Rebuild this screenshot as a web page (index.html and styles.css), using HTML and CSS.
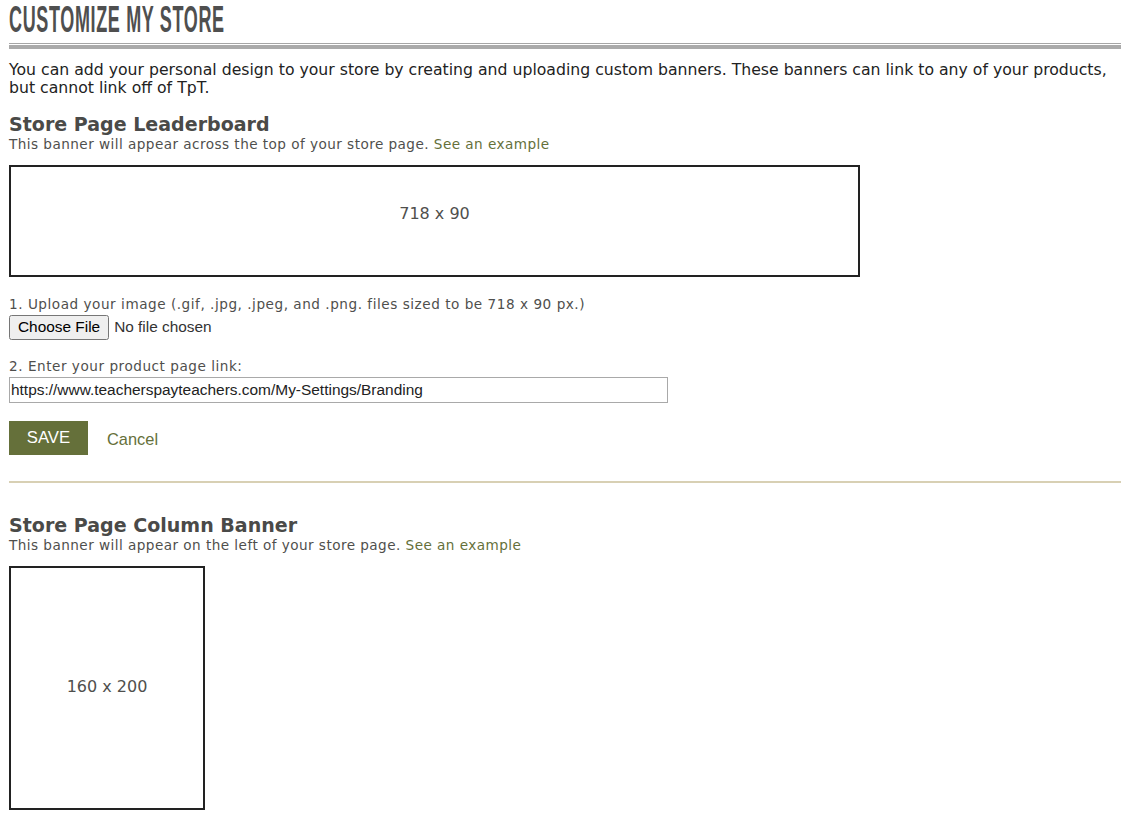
FILE: index.html
```html
<!DOCTYPE html>
<html lang="en">
<head>
<meta charset="utf-8">
<title>Customize My Store</title>
<link rel="stylesheet" href="styles.css">
</head>
<body>
<main class="page">
  <h1 class="title"><span class="title-text">CUSTOMIZE MY STORE</span></h1>
  <div class="title-rule"></div>
  <p class="intro">You can add your personal design to your store by creating and uploading custom banners. These banners can link to any of your products, but cannot link off of TpT.</p>
  <section class="section">
    <h2 class="heading">Store Page Leaderboard</h2>
    <p class="desc">This banner will appear across the top of your store page. <a class="link" href="#">See an example</a></p>
    <div class="banner banner-wide">718 x 90</div>
    <label class="step step-upload">1. Upload your image (.gif, .jpg, .jpeg, and .png. files sized to be 718 x 90 px.)</label>
    <input class="file" type="file">
    <label class="step step-link">2. Enter your product page link:</label>
    <input class="url" type="text" value="https://www.teacherspayteachers.com/My-Settings/Branding">
    <div class="actions">
      <button class="save" type="button">SAVE</button>
      <a class="cancel" href="#">Cancel</a>
    </div>
  </section>
  <hr class="divider">
  <section class="section section-column">
    <h2 class="heading">Store Page Column Banner</h2>
    <p class="desc">This banner will appear on the left of your store page. <a class="link" href="#">See an example</a></p>
    <div class="banner banner-col">160 x 200</div>
  </section>
</main>
</body>
</html>
```
FILE: styles.css
```css
html, body { margin: 0; padding: 0; background: #fff; }
body { font-family: "DejaVu Sans", Verdana, sans-serif; color: #4f4f4d; overflow: hidden; height: 817px; }
.page { width: 1112px; margin-left: 9px; }
.title { margin: 0; height: 43px; font-family: "Liberation Sans", sans-serif; font-size: 36px; line-height: 40px; font-weight: 700; color: #4f4f4f; white-space: nowrap; }
.title-text { display: inline-block; transform: scaleX(0.5); transform-origin: left center; letter-spacing: 1.3px; }
.title-rule { height: 1px; border-top: 1px solid #a6a6a6; border-bottom: 4px solid #aaa; }
.intro { margin: 12px 0 0; font-size: 15.7px; line-height: 18px; color: #222; }
.section { margin: 0; }
.heading { margin: 0; font-size: 19.05px; line-height: 22px; font-weight: 700; color: #4a4a48; padding-top: 16px; }
.section-column .heading { padding-top: 31px; }
.desc { margin: 1px 0 0; font-size: 13.6px; line-height: 16px; letter-spacing: 0.45px; }
.link { color: #65703a; text-decoration: none; }
.banner { box-sizing: border-box; border: 2px solid #222; display: flex; align-items: center; justify-content: center; font-size: 16px; }
.banner-wide { width: 851px; height: 112px; margin-top: 13px; padding-bottom: 16px; }
.banner-col { width: 196px; height: 244px; margin-top: 13px; padding-bottom: 4px; }
.step { display: block; font-size: 13.6px; line-height: 16px; letter-spacing: 0.53px; }
.step-upload { margin-top: 19px; }
.file { display: block; margin-top: 3px; font-family: "Liberation Sans", Arial, sans-serif; font-size: 15.4px; color: #333; }
.file::file-selector-button { padding: 1px 7px 2px; margin-right: 5px; }
.step-link { margin-top: 18px; }
.url { display: block; box-sizing: border-box; width: 659px; height: 26px; margin-top: 3px; padding: 0 1px; border: 1px solid #a9a9a9; font-family: "Liberation Sans", Arial, sans-serif; font-size: 15.45px; color: #222; }
.actions { display: flex; align-items: center; gap: 19px; margin-top: 18px; }
.save { width: 79px; height: 34px; border: 0; padding: 0 0 1px; background: #65703a; color: #fff; font-family: "Liberation Sans", Arial, sans-serif; font-size: 16.7px; }
.cancel { color: #65703a; text-decoration: none; font-family: "Liberation Sans", Arial, sans-serif; font-size: 16.4px; padding-top: 3px; }
.divider { border: 0; border-top: 2px solid #d8d0b4; margin: 26px 0 0; }
```
